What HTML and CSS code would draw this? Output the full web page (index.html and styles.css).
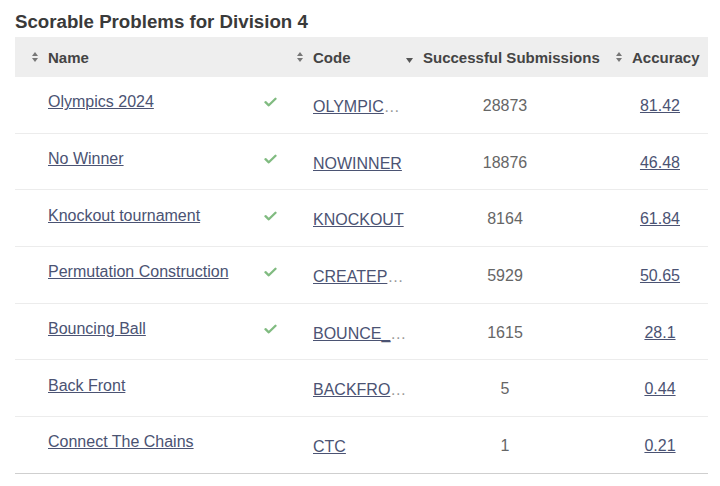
FILE: index.html
```html
<!DOCTYPE html>
<html>
<head>
<meta charset="utf-8">
<link rel="stylesheet" href="styles.css">
</head>
<body>
<div class="wrap">
  <h2 class="title">Scorable Problems for Division 4</h2>
  <div class="table">
    <div class="row head">
      <div class="th"><svg class="sort" width="6" height="10" viewBox="0 0 6 10"><path d="M3 0L6 4H0Z M0 6H6L3 10Z"/></svg><span>Name</span></div>
      <div class="th"><svg class="sort" width="6" height="10" viewBox="0 0 6 10"><path d="M3 0L6 4H0Z M0 6H6L3 10Z"/></svg><span>Code</span></div>
      <div class="th"><svg class="desc" width="7" height="5" viewBox="0 0 7 5"><path d="M0 0H7L3.5 5Z"/></svg><span>Successful Submissions</span></div>
      <div class="th"><svg class="sort" width="6" height="10" viewBox="0 0 6 10"><path d="M3 0L6 4H0Z M0 6H6L3 10Z"/></svg><span>Accuracy</span></div>
    </div>

    <div class="row">
      <div class="name"><a href="#">Olympics 2024</a><svg class="check" width="13" height="10" viewBox="0 0 13 10"><path d="M1.5 5.2L4.8 8.3L11.5 1.7"/></svg></div>
      <div class="code"><div class="clip"><a href="#">OLYMPICS2024</a></div></div>
      <div class="subs">28873</div>
      <div class="acc"><a href="#">81.42</a></div>
    </div>
    <div class="row">
      <div class="name"><a href="#">No Winner</a><svg class="check" width="13" height="10" viewBox="0 0 13 10"><path d="M1.5 5.2L4.8 8.3L11.5 1.7"/></svg></div>
      <div class="code"><div class="clip"><a href="#">NOWINNER</a></div></div>
      <div class="subs">18876</div>
      <div class="acc"><a href="#">46.48</a></div>
    </div>
    <div class="row">
      <div class="name"><a href="#">Knockout tournament</a><svg class="check" width="13" height="10" viewBox="0 0 13 10"><path d="M1.5 5.2L4.8 8.3L11.5 1.7"/></svg></div>
      <div class="code"><div class="clip"><a href="#">KNOCKOUT</a></div></div>
      <div class="subs">8164</div>
      <div class="acc"><a href="#">61.84</a></div>
    </div>
    <div class="row">
      <div class="name"><a href="#">Permutation Construction</a><svg class="check" width="13" height="10" viewBox="0 0 13 10"><path d="M1.5 5.2L4.8 8.3L11.5 1.7"/></svg></div>
      <div class="code"><div class="clip"><a href="#">CREATEPERM</a></div></div>
      <div class="subs">5929</div>
      <div class="acc"><a href="#">50.65</a></div>
    </div>
    <div class="row">
      <div class="name"><a href="#">Bouncing Ball</a><svg class="check" width="13" height="10" viewBox="0 0 13 10"><path d="M1.5 5.2L4.8 8.3L11.5 1.7"/></svg></div>
      <div class="code"><div class="clip"><a href="#">BOUNCE_BALL</a></div></div>
      <div class="subs">1615</div>
      <div class="acc"><a href="#">28.1</a></div>
    </div>
    <div class="row">
      <div class="name"><a href="#">Back Front</a></div>
      <div class="code"><div class="clip"><a href="#">BACKFRONT</a></div></div>
      <div class="subs">5</div>
      <div class="acc"><a href="#">0.44</a></div>
    </div>
    <div class="row last">
      <div class="name"><a href="#">Connect The Chains</a></div>
      <div class="code"><div class="clip"><a href="#">CTC</a></div></div>
      <div class="subs">1</div>
      <div class="acc"><a href="#">0.21</a></div>
    </div>
  </div>
</div>
</body>
</html>
```

FILE: styles.css
```css
* { box-sizing: border-box; }
html, body { margin: 0; padding: 0; background: #fff; }
body { font-family: "Liberation Sans", Arial, sans-serif; color: #555; }
.wrap { padding: 11px 12px 0 15px; }
.title {
  margin: 0 0 4px 0;
  font-size: 18.7px;
  line-height: 22px;
  font-weight: bold;
  color: #3a3a3a;
}
.table { width: 693px; }
.row {
  display: grid;
  grid-template-columns: 265px 109px 210px 109px;
  height: 56.7px;
  border-bottom: 1px solid #ececec;
  align-items: center;
}
.row.last { border-bottom-color: #cfcfcf; }
.row.head {
  height: 40px;
  background: #eeeeee;
  border-bottom: none;
}
.th {
  display: flex;
  align-items: center;
  padding-left: 17px;
  font-size: 15px;
  font-weight: bold;
  color: #444;
  height: 100%;
  white-space: nowrap;
}
.th .sort { fill: #777; margin-right: 10px; flex: none; }
.th .desc { fill: #555; margin-right: 10px; margin-top: 7px; flex: none; }
a { color: #4b5373; text-decoration: underline; }
.name {
  display: flex;
  align-items: center;
  padding-left: 33px;
  padding-right: 3px;
  padding-bottom: 5px;
  font-size: 16px;
}
.check {
  margin-left: auto;
  fill: none;
  stroke: #80bb80;
  stroke-width: 2.3;
  stroke-linecap: round;
  stroke-linejoin: round;
}
.code { padding-left: 33px; padding-top: 4px; font-size: 16px; }
.clip {
  width: 95px;
  white-space: nowrap;
  overflow: hidden;
  text-overflow: ellipsis;
  color: #999;
}
.subs { padding-left: 22px; padding-top: 2px; text-align: center; font-size: 16px; color: #666; }
.acc { padding-left: 13px; padding-top: 2px; text-align: center; font-size: 16px; }
```
